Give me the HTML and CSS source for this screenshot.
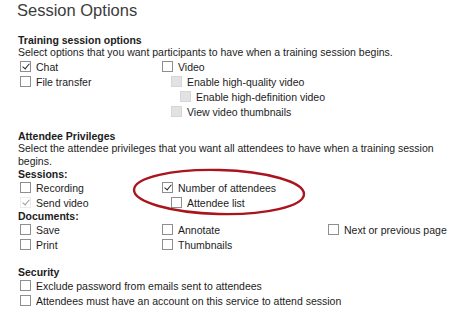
FILE: index.html
```html
<!DOCTYPE html>
<html lang="en">
<head>
    <meta charset="UTF-8">
    <title>Session Options</title>
    <link rel="stylesheet" href="styles.css">
</head>
<body>
    <h1 class="title">Session Options</h1>

    <section class="group first">
        <h2>Training session options</h2>
        <p class="desc">Select options that you want participants to have when a training session begins.</p>
        <div class="opts">
            <div class="col">
                <label class="opt"><span class="cb checked"></span>Chat</label>
                <label class="opt"><span class="cb"></span>File transfer</label>
            </div>
            <div class="col">
                <label class="opt"><span class="cb"></span>Video</label>
                <label class="opt sub1"><span class="cb off"></span>Enable high-quality video</label>
                <label class="opt sub2"><span class="cb off"></span>Enable high-definition video</label>
                <label class="opt sub1"><span class="cb off"></span>View video thumbnails</label>
            </div>
        </div>
    </section>

    <section class="group">
        <h2>Attendee Privileges</h2>
        <p class="desc">Select the attendee privileges that you want all attendees to have when a training session begins.</p>
        <h3>Sessions:</h3>
        <div class="opts marked">
            <div class="col">
                <label class="opt"><span class="cb"></span>Recording</label>
                <label class="opt"><span class="cb off checked"></span>Send video</label>
            </div>
            <div class="col">
                <label class="opt"><span class="cb checked"></span>Number of attendees</label>
                <label class="opt sub1"><span class="cb"></span>Attendee list</label>
            </div>
            <!-- red marker drawn over the options -->
            <svg class="ring" width="180" height="54" viewBox="0 0 180 54">
                <ellipse cx="90" cy="27" rx="85" ry="22" fill="none" stroke="#a9141d" stroke-width="2.4" transform="rotate(1.5 90 27)"/>
            </svg>
        </div>
        <h3>Documents:</h3>
        <div class="opts">
            <div class="col">
                <label class="opt"><span class="cb"></span>Save</label>
                <label class="opt"><span class="cb"></span>Print</label>
            </div>
            <div class="col">
                <label class="opt"><span class="cb"></span>Annotate</label>
                <label class="opt"><span class="cb"></span>Thumbnails</label>
            </div>
            <div class="col">
                <label class="opt"><span class="cb"></span>Next or previous page</label>
            </div>
        </div>
    </section>

    <section class="group security">
        <h2>Security</h2>
        <label class="opt"><span class="cb"></span>Exclude password from emails sent to attendees</label>
        <label class="opt"><span class="cb"></span>Attendees must have an account on this service to attend session</label>
    </section>
</body>
</html>
```

FILE: styles.css
```css
body {
    margin: 0;
    padding: 0 10px 0 18px;
    font-family: "Liberation Sans", Arial, sans-serif;
    font-size: 10.5px;
    color: #1c1c1c;
    background: white;
}

.title {
    margin: 0 0 0 -1px;
    font-size: 16.5px;
    font-weight: normal;
    line-height: 20px;
    color: #3c3c3c;
}

.group {
    margin-top: 11px;
}

.group.first {
    margin-top: 14px;
}

.group.security {
    margin-top: 14px;
}

h2, h3 {
    margin: 0;
    font-size: 10.5px;
    font-weight: bold;
    line-height: 12px;
}

.desc {
    margin: 0;
    line-height: 13px;
}

.opts {
    display: grid;
    grid-template-columns: 142px 166px auto;
    position: relative;
}

.col {
    display: flex;
    flex-direction: column;
}

.opt {
    display: flex;
    align-items: center;
    gap: 5px;
    height: 15px;
    padding-left: 2px;
    white-space: nowrap;
}

.sub1 {
    padding-left: 11px;
}

.sub2 {
    padding-left: 20px;
}

.cb {
    box-sizing: border-box;
    width: 11px;
    height: 11px;
    border: 1px solid #8e8e8e;
    background: white;
    flex: none;
    position: relative;
}

.cb.off {
    border-color: #d6d6d6;
    background: #e2e2e2;
}

.cb.checked::after {
    content: "";
    position: absolute;
    left: 3px;
    top: 0;
    width: 3px;
    height: 6px;
    border: solid #262626;
    border-width: 0 1.5px 1.5px 0;
    transform: rotate(40deg);
}

.cb.off.checked {
    background: white;
    border-color: #ececec;
}

.cb.off.checked::after {
    border-color: #9c9c9c;
}

.ring {
    position: absolute;
    left: 111px;
    top: -15px;
    pointer-events: none;
}
```
